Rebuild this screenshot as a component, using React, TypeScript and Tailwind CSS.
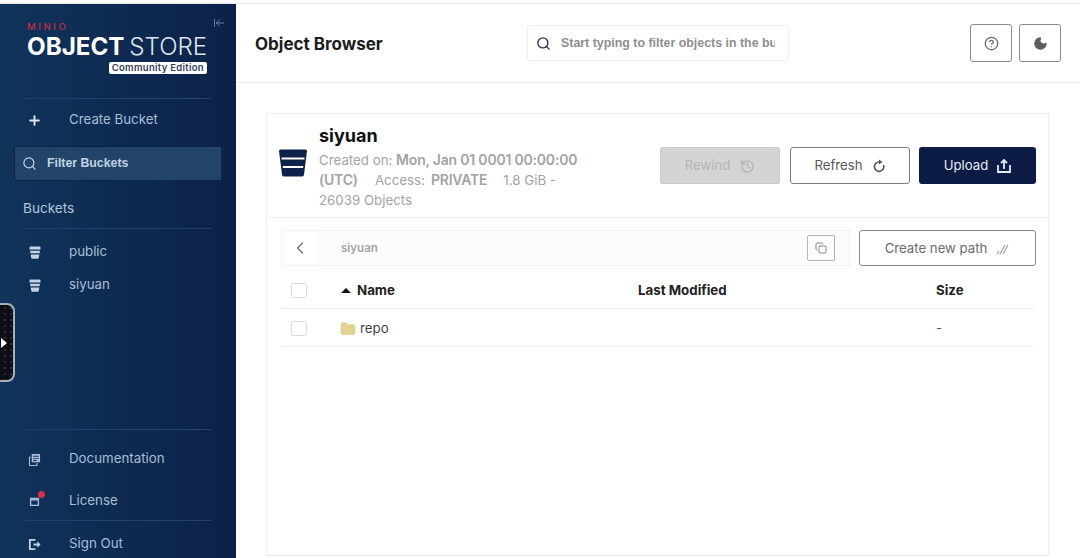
import { ArrowLeftToLine, ChevronLeft, CircleHelp, Copy, FolderClosed, History, Moon, Plus, Search } from 'lucide-react'

function BucketIcon({ className }: { className: string }) {
  return (
    <svg viewBox="0 0 28 28" className={className} fill="currentColor">
      <path d="M0 2a1.5 1.5 0 0 1 1.5-1.5h25A1.5 1.5 0 0 1 28 2l-3 23.5a2 2 0 0 1-2 2H5a2 2 0 0 1-2-2z" />
      <path d="M2.5 9.5h23M3.8 18h20.4" stroke="#fff" strokeWidth="1.8" />
    </svg>
  )
}

function SmallBucket() {
  return (
    <svg viewBox="0 0 12 13" className="w-[12px] h-[13px] text-[#c3d2e2]" fill="currentColor">
      <path d="M0.5 1.5a1 1 0 0 1 1-1h9a1 1 0 0 1 1 1v2h-11zM1 4.8h10l-.4 2.4H1.4zM1.7 8.4h8.6l-.6 3.6a1 1 0 0 1-1 .8H3.3a1 1 0 0 1-1-.8z" />
    </svg>
  )
}

function NavRow({ icon, label, className = '' }: { icon: React.ReactNode; label: string; className?: string }) {
  return (
    <div className={`flex items-center h-[22px] ${className}`}>
      <div className="w-[69px] flex justify-center shrink-0">{icon}</div>
      <span className="text-[13.3px] text-[#a9bdd6]">{label}</span>
    </div>
  )
}

function Divider({ className = '' }: { className?: string }) {
  return <div className={`h-px bg-[#24416b] ml-[23px] mr-[25px] ${className}`} />
}

export default function App() {
  return (
    <div className="relative w-[1080px] h-[558px] overflow-hidden bg-white font-['Inter',sans-serif] flex flex-col">
      <div className="h-[4px] shrink-0 bg-white border-b border-[#e8e8e8]" />
      <div className="flex flex-1 min-h-0">
        {/* sidebar */}
        <aside className="w-[236px] shrink-0 flex flex-col bg-gradient-to-r from-[#10345a] to-[#0c2148]">
          <div className="relative h-[94px] shrink-0 pl-[27px] pt-[18px]">
            <ArrowLeftToLine size={12} strokeWidth={1.2} className="absolute right-[11px] top-[13px] text-[#a9bdd6]" />
            <div className="text-[9.5px] leading-[10px] tracking-[2.6px] text-[#c72c48] font-medium">MINIO</div>
            <div className="text-[24.2px] leading-[30px] text-white whitespace-nowrap font-bold">
              OBJECT <span className="font-light text-[#dde5ee] -ml-[1px]">STORE</span>
            </div>
            <div className="flex justify-end w-[180px]">
              <span className="bg-white rounded-[2px] text-[#33405a] text-[9.5px] leading-[12px] font-semibold px-[3px] tracking-[0.3px] whitespace-nowrap">
                Community Edition
              </span>
            </div>
          </div>
          <Divider className="mx-[28px]" />
          <NavRow className="mt-[10px]" icon={<Plus size={15} strokeWidth={3} className="text-[#dfe7f0]" />} label="Create Bucket" />
          <div className="mt-[15px] mx-[14px] h-[35px] shrink-0 rounded-[2px] bg-[#224468] border border-[#0d2444] flex items-center pl-[7px]">
            <Search size={15} className="text-[#c3d2e2]" />
            <span className="ml-[10px] text-[12.3px] font-bold text-[#c3d2e2] font-['Liberation_Sans',sans-serif]">Filter Buckets</span>
          </div>
          <div className="mt-[17px] pl-[23px] text-[13.6px] leading-[20px] text-[#b4c6dc]">Buckets</div>
          <Divider className="mt-[10px]" />
          <NavRow className="mt-[12px]" icon={<SmallBucket />} label="public" />
          <NavRow className="mt-[11px]" icon={<SmallBucket />} label="siyuan" />
          <div className="flex-1" />
          <Divider />
          <NavRow className="mt-[18px]" icon={
            <svg viewBox="0 0 14 14" className="w-[13px] h-[13px] text-[#a9bdd6]" fill="currentColor">
              <path d="M4 1h9v9H4zM5.500 3v1h6V3zm0 2.300v1h6v-1zm0 2.300v1h4v-1z" fillRule="evenodd" />
              <path d="M1 4h2v1.200H2.200v7.600H9V11h1.200v3H1z" />
            </svg>
          } label="Documentation" />
          <NavRow className="mt-[20px]" icon={
            <div className="relative">
              <svg viewBox="0 0 12 12" className="w-[11px] h-[11px] text-[#a9bdd6]" fill="currentColor">
                <path d="M1 2h10v9H1zM2.500 5v4.500h7V5z" fillRule="evenodd" />
              </svg>
              <span className="absolute -top-[5px] -right-[5px] w-[7px] h-[7px] rounded-full bg-[#d6304c]" />
            </div>
          } label="License" />
          <Divider className="mt-[8px]" />
          <NavRow className="mt-[12px] mb-[3px]" icon={
            <svg viewBox="0 0 14 14" className="w-[13px] h-[13px] text-[#c3d2e2]" fill="currentColor">
              <path d="M1 1h7v2H3v8h5v2H1z" />
              <path d="M6 6h4V3.500L13.500 7 10 10.500V8H6z" />
            </svg>
          } label="Sign Out" />
        </aside>

        {/* main */}
        <main className="flex-1 min-w-0 flex flex-col">
          <header className="h-[79px] shrink-0 border-b border-[#e8e8e8] flex items-center pl-[19px] pr-[19px]">
            <h1 className="w-[272px] mt-[4px] text-[17px] font-bold text-[#1c1c1c]">Object Browser</h1>
            <div className="w-[262px] h-[36px] border border-[#eeeeee] rounded-[2px] flex items-center pl-[8px]">
              <Search size={15} strokeWidth={2.2} className="text-[#2b3350] shrink-0" />
              <input
                readOnly
                placeholder="Start typing to filter objects in the bucket"
                className="ml-[10px] w-[214px] outline-none text-[12.4px] font-bold placeholder:text-[#8f8f8f] font-['Liberation_Sans',sans-serif]"
              />
            </div>
            <div className="ml-auto flex gap-[7px]">
              <div className="w-[42px] h-[38px] rounded-[3px] border border-[#8a8a8a] flex items-center justify-center">
                <CircleHelp size={15} className="text-[#696969]" />
              </div>
              <div className="w-[42px] h-[38px] rounded-[3px] border border-[#8a8a8a] flex items-center justify-center">
                <Moon size={15} className="text-[#5c5c5c]" fill="#5c5c5c" />
              </div>
            </div>
          </header>

          <div className="flex-1 min-h-0 pt-[30px] pl-[30px] pr-[31px] pb-[2px]">
            <section className="h-full border border-[#eeeeee] flex flex-col">
              {/* bucket summary */}
              <div className="h-[104px] shrink-0 border-b border-[#eeeeee] flex items-start pt-[10px] pl-[12px] pr-[12px]">
                <BucketIcon className="w-[28px] h-[28px] mt-[25px] text-[#0e2148] shrink-0" />
                <div className="ml-[12px] w-[270px]">
                  <div className="text-[18px] leading-[24px] font-bold text-[#111111]">siyuan</div>
                  <div className="mt-[2px] text-[13.3px] leading-[20px] text-[#a3a3a3]">
                    Created on: <b className="text-[14px] font-semibold tracking-[-0.2px]">Mon, Jan 01 0001 00:00:00 (UTC)</b>
                    <span className="ml-[17px]">Access:</span>
                    <b className="text-[14px] font-semibold ml-[6px] tracking-[-0.2px]">PRIVATE</b>
                    <span className="ml-[16px]">1.8 GiB -</span> 26039 Objects
                  </div>
                </div>
                <div className="ml-auto flex mt-[23px]">
                  <div className="w-[120px] h-[37px] mr-[10px] pt-[1px] rounded-[2px] bg-[#d3d5d5] border border-[#c9cbcb] flex items-center justify-center gap-[10px] text-[13.2px] text-[#b3b6b6]">
                    Rewind <History size={15} strokeWidth={2.2} />
                  </div>
                  <div className="w-[120px] h-[37px] mr-[9px] pt-[1px] rounded-[3px] border border-[#7d7d7d] flex items-center justify-center gap-[9px] text-[13.2px] text-[#595959]">
                    Refresh
                    <svg viewBox="0 0 14 14" className="w-[14px] h-[14px]" fill="none" stroke="currentColor" strokeWidth="1.700">
                      <path d="M7.500 3A4.700 4.700 0 1 0 11.500 6" />
                      <path d="M7 0.500v5L10.500 3z" fill="currentColor" stroke="none" />
                    </svg>
                  </div>
                  <div className="w-[117px] h-[37px] rounded-[3px] bg-[#0c1c45] flex items-center justify-center gap-[9px] text-[13.2px] text-[#e8ecf3]">
                    Upload
                    <svg viewBox="0 0 14 14" className="w-[14px] h-[14px]" fill="none" stroke="currentColor" strokeWidth="1.800">
                      <path d="M1 6v7h12V6" />
                      <path d="M7 10V2" />
                      <path d="M4 4.200L7 1l3 3.200" />
                    </svg>
                  </div>
                </div>
              </div>

              {/* path bar */}
              <div className="flex items-center mt-[12px] pl-[14px] pr-[12px] h-[36px] shrink-0">
                <div className="flex-1 h-[36px] border border-[#f1f1f1] flex items-center bg-[#fcfcfc]">
                  <div className="w-[36px] flex justify-center bg-white h-full items-center">
                    <ChevronLeft size={20} strokeWidth={1.5} className="text-[#6f6f6f]" />
                  </div>
                  <span className="ml-[23px] pt-[2px] text-[11.5px] font-semibold text-[#a3a3a3]">siyuan</span>
                  <div className="ml-auto mr-[14px] w-[28px] h-[26px] rounded-[2px] border border-[#b5b5b5] flex items-center justify-center">
                    <Copy size={12} className="text-[#8a8a8a]" />
                  </div>
                </div>
                <div className="ml-[9px] w-[177px] h-[36px] pt-[2px] rounded-[3px] border border-[#8a8a8a] flex items-center justify-center gap-[9px] text-[13.2px] text-[#6b6b6b]">
                  Create new path
                  <svg viewBox="0 0 14 12" className="w-[14px] h-[12px] text-[#a0a0a0]" fill="none" stroke="currentColor" strokeWidth="1.200">
                    <path d="M1 11l2-3M4 11l5-9M7 11l5-9" />
                  </svg>
                </div>
              </div>

              {/* object table */}
              <div className="mt-[5px] ml-[14px] mr-[14px] h-[38px] pt-[2px] shrink-0 border-b border-[#eeeeee] flex items-center text-[13.3px] font-bold text-[#222222]">
                <div className="w-[16px] ml-[10px] h-[15px] border border-[#dddddd] rounded-[2px]" />
                <div className="ml-[34px] w-[297px] flex items-center gap-[6px]">
                  <span className="w-0 h-0 border-x-[5px] border-x-transparent border-b-[5px] border-b-[#111111]" />
                  Name
                </div>
                <div className="w-[298px]">Last Modified</div>
                <div>Size</div>
              </div>
              <div className="ml-[14px] mr-[14px] h-[38px] pt-[2px] shrink-0 border-b border-[#eeeeee] flex items-center text-[13.3px] text-[#444444]">
                <div className="w-[16px] ml-[10px] h-[15px] border border-[#dddddd] rounded-[2px]" />
                <div className="ml-[33px] w-[596px] flex items-center gap-[4px]">
                  <FolderClosed size={16} className="text-[#e3d391]" fill="#e3d391" />
                  repo
                </div>
                <div className="text-[#555555]">-</div>
              </div>
            </section>
          </div>
        </main>
      </div>

      {/* floating player handle over the sidebar */}
      <div className="absolute left-[-12px] top-[303px] w-[27px] h-[79px] rounded-[8px] bg-[#0c0f16] bg-[radial-gradient(circle,#2a2e36_1px,transparent_1px)] bg-[length:6px_6px] border-2 border-[#a8b0bb] flex items-center justify-end pr-[6px]">
        <span className="w-0 h-0 border-y-[5px] border-y-transparent border-l-[6px] border-l-white" />
      </div>
    </div>
  )
}
